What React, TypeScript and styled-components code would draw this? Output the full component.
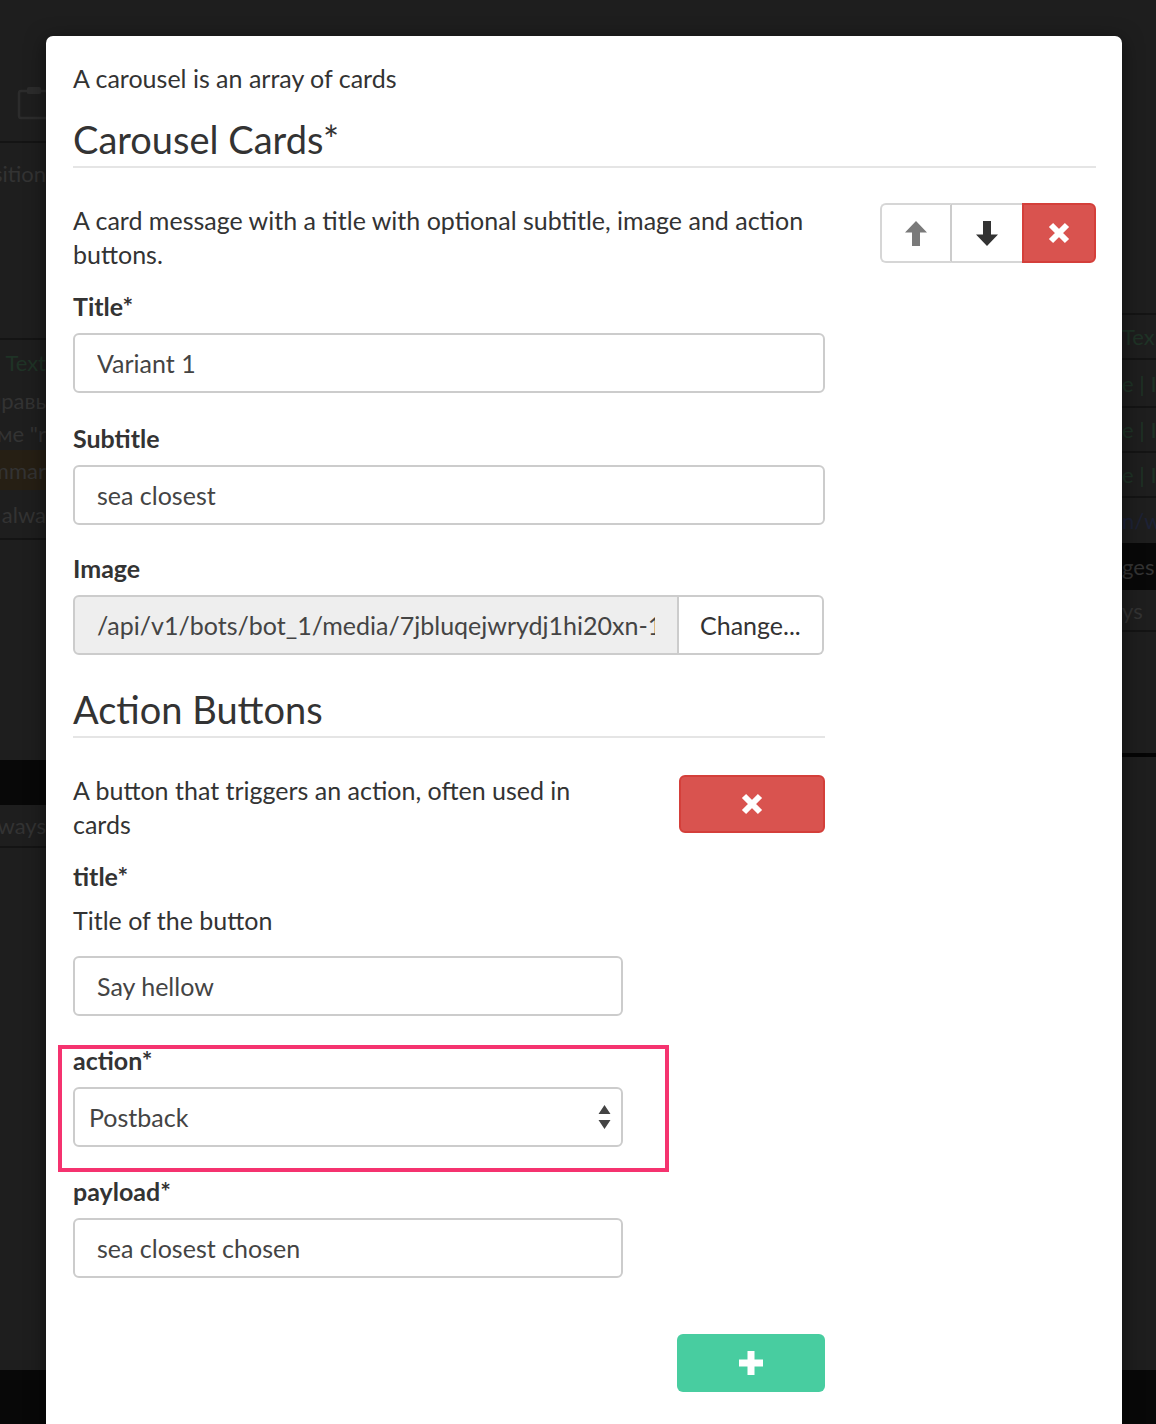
import styled, { createGlobalStyle } from "styled-components";

const GlobalStyle = createGlobalStyle`
    html, body {
        margin : 0;
        padding : 0;
        background : #1e1e1e;
    }
    body {
        font-family : Lato, "Open Sans", "Liberation Sans", sans-serif;
        color : #333;
    }
    * {
        box-sizing : border-box;
    }
`

type StripRow = { h: number; text?: string; tone?: "plain" | "green" | "blue" | "orange" | "black"; line?: boolean; thickLine?: boolean };

const leftRows: StripRow[] = [
    { h: 143, line: true },
    { h: 60, text: "Position" },
    { h: 137, line: true },
    { h: 44, text: "Text", tone: "green" },
    { h: 33, text: "Поправь" },
    { h: 33, text: "Наме \"r" },
    { h: 40, text: "Summar", tone: "orange" },
    { h: 50, text: "is alwa", line: true },
    { h: 220 },
    { h: 45, tone: "black" },
    { h: 43, text: "always", line: true },
    { h: 522 },
    { h: 54, tone: "black" },
];

const rightRows: StripRow[] = [
    { h: 315, line: true },
    { h: 45, text: "Tex", tone: "green", line: true },
    { h: 48, text: "e | In", tone: "green", line: true },
    { h: 45, text: "e | In", tone: "green", line: true },
    { h: 45, text: "e | In", tone: "green", line: true },
    { h: 45, text: "n/w", tone: "blue" },
    { h: 47, text: "ges", tone: "black" },
    { h: 42, text: "ys", line: true },
    { h: 125, thickLine: true },
    { h: 613 },
    { h: 54, tone: "black" },
];

const ArrowUpIcon = ({ color }: { color: string }) => (
    <svg width="22" height="25" viewBox="0 0 22 25">
        <path d="M11 0 L22 11.5 L15 11.5 L15 25 L7 25 L7 11.5 L0 11.5 Z" fill={color} />
    </svg>
);

const ArrowDownIcon = ({ color }: { color: string }) => (
    <svg width="22" height="25" viewBox="0 0 22 25">
        <path d="M11 25 L22 13.5 L15 13.5 L15 0 L7 0 L7 13.5 L0 13.5 Z" fill={color} />
    </svg>
);

const RemoveIcon = () => (
    <svg width="22" height="22" viewBox="0 0 22 22">
        <path d="M3 3 L19 19 M19 3 L3 19" stroke="#fff" strokeWidth="6" />
    </svg>
);

const PlusIcon = () => (
    <svg width="24" height="24" viewBox="0 0 24 24">
        <path d="M12 0 V24 M0 12 H24" stroke="#fff" strokeWidth="7" />
    </svg>
);

const SelectArrows = () => (
    <svg width="13" height="26" viewBox="0 0 13 26">
        <path d="M6.5 1 L12.5 10 L0.5 10 Z M6.5 25 L12.5 16 L0.5 16 Z" fill="#444" />
    </svg>
);

const ClipboardIcon = () => (
    <svg width="34" height="34" viewBox="0 0 34 34">
        <rect x="2" y="5" width="30" height="27" rx="2" fill="none" stroke="#2c2c2c" strokeWidth="2.5" />
        <rect x="10" y="1" width="14" height="7" rx="1.5" fill="#2c2c2c" />
    </svg>
);

const Strip = ({ rows, align }: { rows: StripRow[]; align: "left" | "right" }) => (
    <StStrip>
        {rows.map((r, i) => (
            <StStripRow key={i} $h={r.h} $tone={r.tone} $line={r.line} $thick={r.thickLine} $align={align}>
                {i === 0 && align === "left" ? <StClip><ClipboardIcon /></StClip> : null}
                {r.text}
            </StStripRow>
        ))}
    </StStrip>
);

const App = () => {
    return (
        <>
            <GlobalStyle />
            <StPage>
                <StBackdrop>
                    <Strip rows={leftRows} align="left" />
                    <div />
                    <Strip rows={rightRows} align="right" />
                </StBackdrop>

                <StModal>
                    <StIntro>A carousel is an array of cards</StIntro>
                    <StLegend>Carousel Cards*</StLegend>

                    <StCardRow>
                        <div>
                            <StDescription>A card message with a title with optional subtitle, image and action buttons.</StDescription>

                            <StFormGroup>
                                <StLabel>Title*</StLabel>
                                <StInput readOnly value="Variant 1" />
                            </StFormGroup>

                            <StFormGroup $gap={28}>
                                <StLabel>Subtitle</StLabel>
                                <StInput readOnly value="sea closest" />
                            </StFormGroup>

                            <StFormGroup $gap={26}>
                                <StLabel>Image</StLabel>
                                <StInputGroup>
                                    <StPathInput readOnly value="/api/v1/bots/bot_1/media/7jbluqejwrydj1hi20xn-1.png" />
                                    <StChangeButton>Change...</StChangeButton>
                                </StInputGroup>
                            </StFormGroup>

                            <StSubLegend>Action Buttons</StSubLegend>

                            <StItemRow>
                                <div>
                                    <StDescription>A button that triggers an action, often used in cards</StDescription>

                                    <StFieldGroup>
                                        <StLabel>title*</StLabel>
                                        <StHelp>Title of the button</StHelp>
                                        <StInput readOnly value="Say hellow" />
                                    </StFieldGroup>

                                    <StFieldGroup>
                                        <StHighlight />
                                        <StLabel>action*</StLabel>
                                        <StSelect>
                                            <span>Postback</span>
                                            <SelectArrows />
                                        </StSelect>
                                    </StFieldGroup>

                                    <StFieldGroup>
                                        <StLabel>payload*</StLabel>
                                        <StInput readOnly value="sea closest chosen" />
                                    </StFieldGroup>
                                </div>
                                <StItemActions>
                                    <StDangerButton $width={146}><RemoveIcon /></StDangerButton>
                                </StItemActions>
                            </StItemRow>

                            <StAddRow>
                                <StAddButton><PlusIcon /></StAddButton>
                            </StAddRow>
                        </div>

                        <StButtonGroup>
                            <StMoveButton $first><ArrowUpIcon color="#7a7a7a" /></StMoveButton>
                            <StMoveButton><ArrowDownIcon color="#333" /></StMoveButton>
                            <StDangerButton $width={74} $grouped><RemoveIcon /></StDangerButton>
                        </StButtonGroup>
                    </StCardRow>
                </StModal>
            </StPage>
        </>
    );
};

export default App;

const StPage = styled.div`
    position : relative;
    width : 1156px;
    height : 1424px;
    overflow : hidden;
    background : #1e1e1e;
`

const StBackdrop = styled.div`
    display : grid;
    grid-template-columns : 46px 1fr 34px;
    height : 100%;
`

const StStrip = styled.div`
    display : flex;
    flex-direction : column;
    overflow : hidden;
`

const StStripRow = styled.div<{ $h: number; $tone?: string; $line?: boolean; $thick?: boolean; $align: string }>`
    position : relative;
    flex : 0 0 ${p => p.$h}px;
    display : flex;
    align-items : ${p => (p.$h > 80 ? "flex-start" : "center")};
    justify-content : ${p => (p.$align === "left" ? "flex-end" : "flex-start")};
    white-space : nowrap;
    overflow : hidden;
    font-size : 22px;
    padding : ${p => (p.$h > 80 ? "20px 0 0" : "0")};
    color : ${p => (p.$tone === "green" ? "#1f3326" : p.$tone === "blue" ? "#1d2236" : "#333")};
    background : ${p => (p.$tone === "black" ? "#080808" : p.$tone === "orange" ? "#261f14" : "transparent")};
    border-bottom : ${p => (p.$thick ? "4px solid #050505" : p.$line ? "2px solid #141414" : "none")};
`

const StClip = styled.div`
    position : absolute;
    left : 17px;
    top : 86px;
`

const StModal = styled.div`
    position : absolute;
    top : 36px;
    left : 46px;
    width : 1076px;
    height : 1420px;
    background : #fff;
    border-radius : 7px;
    padding : 25px 26px 0 27px;
    box-shadow : 0 4px 20px rgba(0, 0, 0, .5);
`

const StIntro = styled.p`
    margin : 0;
    font-size : 25px;
    line-height : 34px;
`

const StLegend = styled.h3`
    margin : 22px 0 0;
    font-size : 38px;
    font-weight : 400;
    line-height : 45px;
    padding-bottom : 4px;
    border-bottom : 2px solid #e5e5e5;
`

const StSubLegend = styled(StLegend)`
    margin-top : 32px;
    padding-bottom : 4px;
`

const StCardRow = styled.div`
    display : grid;
    grid-template-columns : 752px 1fr;
    margin-top : 35px;
`

const StDescription = styled.p`
    margin : 0;
    font-size : 25px;
    line-height : 34px;
`

const StFormGroup = styled.div<{ $gap?: number }>`
    margin-top : ${p => p.$gap ?? 18}px;
`

const StFieldGroup = styled.div`
    position : relative;
    margin-top : 18px;
    & + & {
        margin-top : 27px;
    }
`

const StLabel = styled.label`
    display : block;
    font-size : 25px;
    font-weight : 700;
    line-height : 34px;
    margin-bottom : 10px;
`

const StHelp = styled.p`
    margin : 0 0 19px;
    font-size : 25px;
    line-height : 34px;
`

const StInput = styled.input`
    display : block;
    width : 100%;
    height : 60px;
    padding : 0 22px;
    font-family : inherit;
    font-size : 25px;
    color : #444;
    background : #fff;
    border : 2px solid #ccc;
    border-radius : 6px;
    outline : none;
`

const StInputGroup = styled.div`
    display : flex;
    width : 751px;
`

const StPathInput = styled(StInput)`
    flex : 0 0 606px;
    width : 606px;
    background : #eee;
    border-radius : 6px 0 0 6px;
    text-overflow : clip;
`

const StChangeButton = styled.button`
    flex : 1;
    height : 60px;
    padding : 0 21px;
    font-family : inherit;
    font-size : 25px;
    color : #333;
    background : #fff;
    border : 2px solid #ccc;
    border-left : none;
    border-radius : 0 6px 6px 0;
    text-align : left;
`

const StSelect = styled.div`
    display : flex;
    align-items : center;
    justify-content : space-between;
    height : 60px;
    padding : 0 10px 0 14px;
    font-size : 25px;
    color : #444;
    border : 2px solid #ccc;
    border-radius : 6px;
`

const StHighlight = styled.div`
    position : absolute;
    top : 2px;
    left : -15px;
    width : 611px;
    height : 127px;
    border : 4px solid #f5336f;
    pointer-events : none;
`

const StItemRow = styled.div`
    display : grid;
    grid-template-columns : 550px 1fr;
    margin-top : 35px;
`

const StItemActions = styled.div`
    display : flex;
    justify-content : flex-end;
    align-items : flex-start;
    padding-top : 2px;
`

const StDangerButton = styled.button<{ $width: number; $grouped?: boolean }>`
    display : flex;
    align-items : center;
    justify-content : center;
    width : ${p => p.$width}px;
    height : ${p => (p.$grouped ? 60 : 58)}px;
    background : #d9534f;
    border : 2px solid #d43f3a;
    border-radius : ${p => (p.$grouped ? "0 6px 6px 0" : "6px")};
    padding : 0;
`

const StButtonGroup = styled.div`
    display : flex;
    justify-content : flex-end;
    align-items : flex-start;
`

const StMoveButton = styled.button<{ $first?: boolean }>`
    display : flex;
    align-items : center;
    justify-content : center;
    width : ${p => (p.$first ? 72 : 70)}px;
    height : 60px;
    background : #fff;
    border : 2px solid #d6d6d6;
    border-left : ${p => (p.$first ? "2px solid #d6d6d6" : "none")};
    border-right : ${p => (p.$first ? "2px solid #ccc" : "none")};
    border-radius : ${p => (p.$first ? "6px 0 0 6px" : "0")};
    padding : 0;
`

const StAddRow = styled.div`
    display : flex;
    justify-content : flex-end;
    margin-top : 56px;
`

const StAddButton = styled.button`
    display : flex;
    align-items : center;
    justify-content : center;
    width : 148px;
    height : 58px;
    background : #48cda0;
    border : none;
    border-radius : 6px;
    padding : 0;
`
